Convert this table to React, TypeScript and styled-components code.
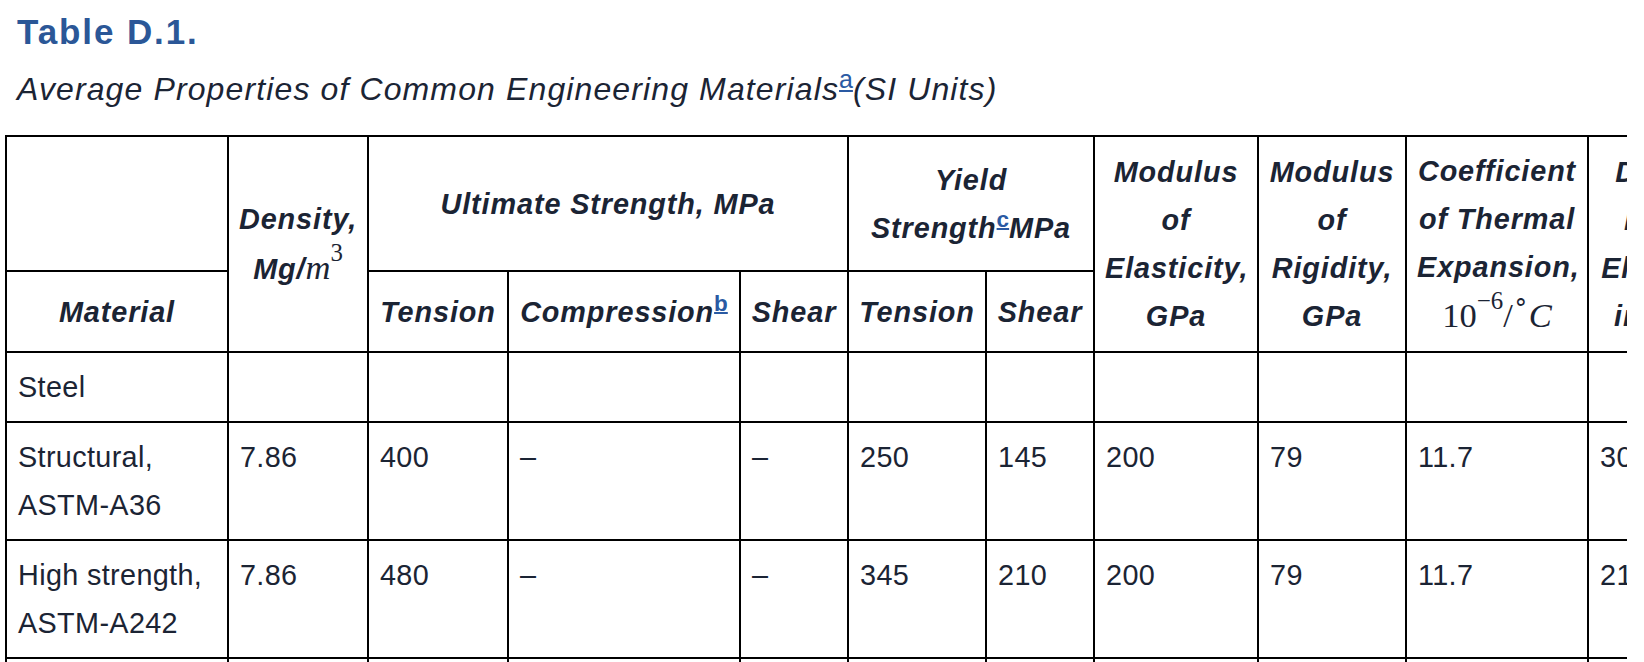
import React from "react";
import styled, { createGlobalStyle } from "styled-components";

const Global = createGlobalStyle`
  html, body {
    margin: 0;
    padding: 0;
    background: #ffffff;
    overflow: hidden;
  }
  body {
    font-family: "Liberation Sans", Arial, Helvetica, sans-serif;
    color: #1b2434;
  }
`;

const Page = styled.div`
  display: flex;
  flex-direction: column;
  width: 1644px;
`;

const Title = styled.h2`
  margin: 0;
  padding-left: 17px;
  font-size: 35px;
  line-height: 63px;
  font-weight: 700;
  letter-spacing: 1.9px;
  color: #2b5797;
`;

const Caption = styled.p`
  margin: 2px 0 0 0;
  padding-left: 17px;
  font-size: 32px;
  line-height: 48px;
  font-style: italic;
  letter-spacing: 1.12px;
  color: #1b2434;
`;

const Scroller = styled.div`
  margin: 22px 0 0 5px;
  width: 1622px;
  overflow: hidden;
`;

const Table = styled.table<{ $w: number }>`
  border-collapse: collapse;
  table-layout: fixed;
  width: ${(p) => p.$w}px;
  font-size: 28.8px;
  line-height: 48px;
  color: #1b2434;
`;

const Col = styled.col<{ $w: number }>`
  width: ${(p) => p.$w}px;
`;

const HeadRow = styled.tr<{ $h: number }>`
  height: ${(p) => p.$h}px;
`;

const Th = styled.th`
  border: 2px solid #000000;
  padding: 10px;
  font-weight: 700;
  font-style: italic;
  letter-spacing: 0.9px;
  text-align: center;
  vertical-align: middle;
  white-space: nowrap;
`;

const Td = styled.td`
  border: 2px solid #000000;
  padding: 10px 10px 10px 11px;
  font-weight: 400;
  letter-spacing: 0.35px;
  text-align: left;
  vertical-align: top;
`;

const Ref = styled.a`
  color: #2a5aa3;
  text-decoration: underline;
  font-style: normal;
  font-size: 0.78em;
  letter-spacing: 0;
  line-height: 0;
  vertical-align: 0.5em;
  cursor: pointer;
`;

const Math = styled.span`
  font-family: "Liberation Serif", "Times New Roman", serif;
  font-weight: 400;
  font-style: normal;
  font-size: 1.2em;
  letter-spacing: 0;
`;

const MathIt = styled.i`
  font-style: italic;
`;

const MathSup = styled.sup`
  font-size: 0.72em;
  line-height: 0;
  vertical-align: 0.72em;
`;

const widths = [222, 140, 140, 232, 108, 138, 108, 164, 148, 182, 184];

type Row = { name: React.ReactNode; values: string[] };

const rows: Row[] = [
  { name: "Steel", values: ["", "", "", "", "", "", "", "", "", ""] },
  {
    name: "Structural, ASTM-A36",
    values: ["7.86", "400", "–", "–", "250", "145", "200", "79", "11.7", "30"],
  },
  {
    name: "High strength, ASTM-A242",
    values: ["7.86", "480", "–", "–", "345", "210", "200", "79", "11.7", "21"],
  },
  {
    name: "Stainless (AISI 302), Cold-rolled",
    values: ["7.92", "860", "–", "–", "520", "–", "190", "75", "17.3", "12"],
  },
];

export default function App() {
  const total = widths.reduce((a, b) => a + b, 0);
  return (
    <Page>
      <Global />
      <Title>Table D.1.</Title>
      <Caption>
        Average Properties of Common Engineering Materials<Ref>a</Ref>(SI Units)
      </Caption>
      <Scroller>
        <Table $w={total}>
          <colgroup>
            {widths.map((w, i) => (
              <Col key={i} $w={w} />
            ))}
          </colgroup>
          <thead>
            <HeadRow $h={134}>
              <Th></Th>
              <Th rowSpan={2}>
                Density,
                <br />
                Mg/
                <Math>
                  <MathIt>m</MathIt>
                  <MathSup>3</MathSup>
                </Math>
              </Th>
              <Th colSpan={3}>Ultimate Strength, MPa</Th>
              <Th colSpan={2}>
                Yield
                <br />
                Strength<Ref>c</Ref>MPa
              </Th>
              <Th rowSpan={2}>
                Modulus
                <br />
                of
                <br />
                Elasticity,
                <br />
                GPa
              </Th>
              <Th rowSpan={2}>
                Modulus
                <br />
                of
                <br />
                Rigidity,
                <br />
                GPa
              </Th>
              <Th rowSpan={2}>
                Coefficient
                <br />
                of Thermal
                <br />
                Expansion,
                <br />
                <Math>
                  10<MathSup>−6</MathSup>/<MathSup>∘</MathSup>
                  <MathIt>C</MathIt>
                </Math>
              </Th>
              <Th rowSpan={2}>
                Ductility,
                <br />
                Percent
                <br />
                Elongation
                <br />
                in 50 mm
              </Th>
            </HeadRow>
            <HeadRow $h={80}>
              <Th>Material</Th>
              <Th>Tension</Th>
              <Th>
                Compression<Ref>b</Ref>
              </Th>
              <Th>Shear</Th>
              <Th>Tension</Th>
              <Th>Shear</Th>
            </HeadRow>
          </thead>
          <tbody>
            {rows.map((r, i) => (
              <tr key={i}>
                <Td>{r.name}</Td>
                {r.values.map((v, j) => (
                  <Td key={j}>{v}</Td>
                ))}
              </tr>
            ))}
          </tbody>
        </Table>
      </Scroller>
    </Page>
  );
}
